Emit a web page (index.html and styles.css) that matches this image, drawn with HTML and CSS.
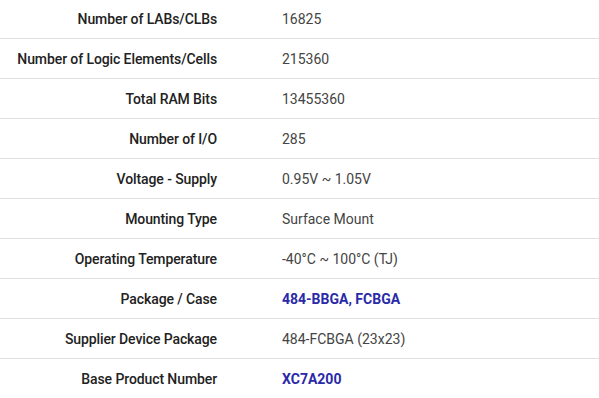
FILE: index.html
```html
<!DOCTYPE html>
<html>
<head>
<meta charset="utf-8">
<link rel="stylesheet" href="styles.css">
</head>
<body>
<div class="specs">
  <div class="row"><div class="label">Number of LABs/CLBs</div><div class="value">16825</div></div>
  <div class="row"><div class="label">Number of Logic Elements/Cells</div><div class="value">215360</div></div>
  <div class="row"><div class="label">Total RAM Bits</div><div class="value">13455360</div></div>
  <div class="row"><div class="label">Number of I/O</div><div class="value">285</div></div>
  <div class="row"><div class="label">Voltage - Supply</div><div class="value">0.95V ~ 1.05V</div></div>
  <div class="row"><div class="label">Mounting Type</div><div class="value">Surface Mount</div></div>
  <div class="row"><div class="label">Operating Temperature</div><div class="value">-40°C ~ 100°C (TJ)</div></div>
  <div class="row"><div class="label">Package / Case</div><div class="value"><a class="link" href="#">484-BBGA, FCBGA</a></div></div>
  <div class="row"><div class="label">Supplier Device Package</div><div class="value">484-FCBGA (23x23)</div></div>
  <div class="row last"><div class="label">Base Product Number</div><div class="value"><a class="link" href="#">XC7A200</a></div></div>
</div>
</body>
</html>
```
FILE: styles.css
```css
html, body {
  margin: 0;
  padding: 0;
  background: #fff;
}
body {
  font-family: Roboto, "Liberation Sans", sans-serif;
  font-size: 14px;
}
.specs {
  margin-top: -1px;
}
.row {
  display: grid;
  grid-template-columns: 217px 1fr;
  column-gap: 65px;
  align-items: center;
  height: 39px;
  border-bottom: 1px solid #e0e0e0;
}
.row.last {
  border-bottom: none;
}
.label {
  text-align: right;
  font-weight: 500;
  letter-spacing: -0.1px;
  color: #222;
}
.value {
  color: #444;
}
.link {
  color: #2a2aa8;
  font-weight: 700;
  text-decoration: none;
}
```
